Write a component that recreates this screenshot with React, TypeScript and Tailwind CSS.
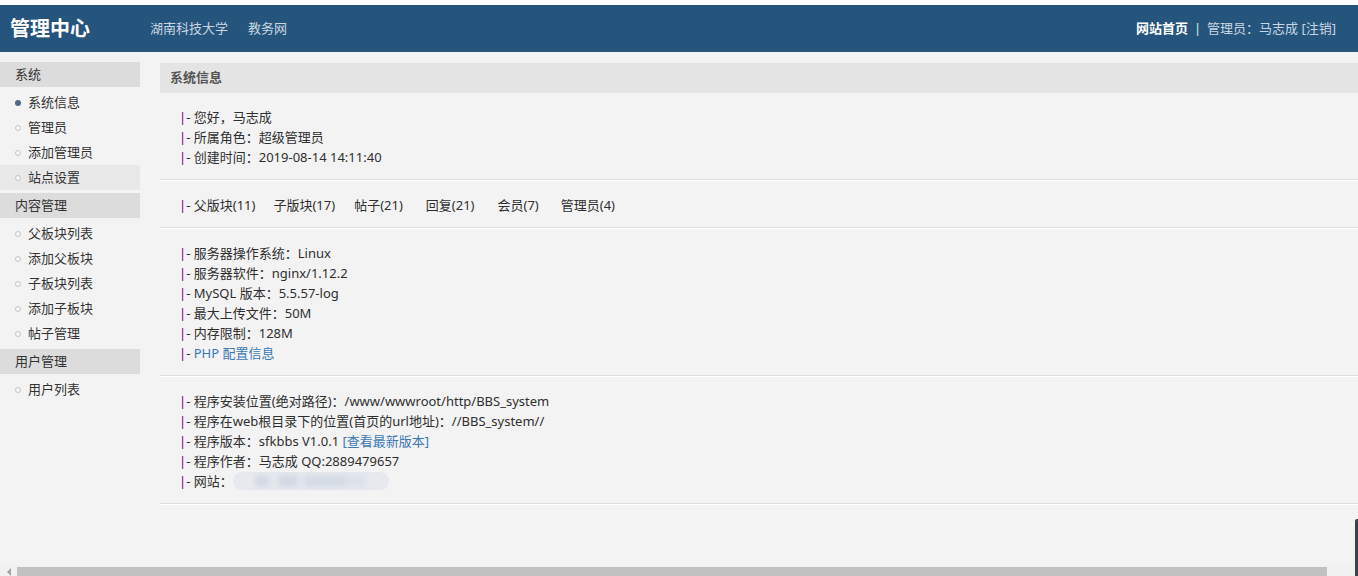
import React from "react";

const menu: { title: string; items: { label: string; active?: boolean; hover?: boolean }[] }[] = [
  {
    title: "系统",
    items: [
      { label: "系统信息", active: true },
      { label: "管理员" },
      { label: "添加管理员" },
      { label: "站点设置", hover: true },
    ],
  },
  {
    title: "内容管理",
    items: [
      { label: "父板块列表" },
      { label: "添加父板块" },
      { label: "子板块列表" },
      { label: "添加子板块" },
      { label: "帖子管理" },
    ],
  },
  {
    title: "用户管理",
    items: [{ label: "用户列表" }],
  },
];

const Bar: React.FC = () => (
  <>
    <span className="text-[#800080]">|</span>
    <span className="whitespace-pre">- </span>
  </>
);

const Line: React.FC<{ children: React.ReactNode }> = ({ children }) => (
  <div className="leading-[20px] whitespace-nowrap">
    <Bar />
    {children}
  </div>
);

const Section: React.FC<{ first?: boolean; children: React.ReactNode }> = ({
  first,
  children,
}) => (
  <div
    className={`${first ? "pt-[14px]" : "pt-[15px]"} pb-[12px] pl-[19px] border-b border-[#dedede] shadow-[0_1px_0_#ffffff]`}
  >
    {children}
  </div>
);

const App: React.FC = () => {
  return (
    <div className="relative h-[576px] w-full overflow-hidden flex flex-col bg-[#f3f3f3] text-[13px] text-[#2f2f2f] font-['Noto_Sans','Noto_Sans_CJK_SC',sans-serif]">
      <div className="h-[5px] bg-white shrink-0" />
      <header className="h-[47px] shrink-0 bg-[#25557d] flex items-center pl-[10px] pr-[22px]">
        <div className="text-[20px] font-bold text-white">管理中心</div>
        <nav className="ml-[60px] flex gap-[20px] text-[#c9d6e2]">
          <span>湖南科技大学</span>
          <span>教务网</span>
        </nav>
        <div className="ml-auto flex items-center text-[#c9d6e2]">
          <span className="font-bold text-white">网站首页</span>
          <span className="mx-[6px] text-[#dfe7ef]">|</span>
          <span>管理员：马志成 [注销]</span>
        </div>
      </header>

      <div className="flex flex-1">
        <aside className="w-[140px] shrink-0 pt-[10px]">
          {menu.map((group, gi) => (
            <div key={group.title} className={gi > 0 ? "mt-[3px]" : ""}>
              <div className="h-[25px] flex items-center pl-[15px] bg-[#dcdcdc] text-[#333]">
                {group.title}
              </div>
              <ul className="pt-[3px]">
                {group.items.map((item) => (
                  <li
                    key={item.label}
                    className={`h-[25px] flex items-center pl-[15px] ${item.hover ? "bg-[#e8e8e8]" : ""}`}
                  >
                    <span
                      className={`w-[6px] h-[6px] rounded-full ${
                        item.active
                          ? "bg-[#4a6987]"
                          : "border border-[#c4c4c4] bg-[#f7f7f7]"
                      }`}
                    />
                    <span className="ml-[7px] text-[#333]">{item.label}</span>
                  </li>
                ))}
              </ul>
            </div>
          ))}
        </aside>

        <main className="flex-1 ml-[20px] pt-[11px]">
          <div className="h-[30px] flex items-center pl-[10px] bg-[#e4e4e4] font-bold text-[#555]">
            系统信息
          </div>

          <Section first>
            <Line>您好，马志成</Line>
            <Line>所属角色：超级管理员</Line>
            <Line>创建时间：2019-08-14 14:11:40</Line>
          </Section>

          <Section>
            <div className="flex leading-[20px] whitespace-nowrap">
              <span>
                <Bar />
                父版块(11)
              </span>
              <span className="ml-[18px]">子版块(17)</span>
              <span className="ml-[19px]">帖子(21)</span>
              <span className="ml-[23px]">回复(21)</span>
              <span className="ml-[23px]">会员(7)</span>
              <span className="ml-[22px]">管理员(4)</span>
            </div>
          </Section>

          <Section>
            <Line>服务器操作系统：Linux</Line>
            <Line>服务器软件：nginx/1.12.2</Line>
            <Line>MySQL 版本：5.5.57-log</Line>
            <Line>最大上传文件：50M</Line>
            <Line>内存限制：128M</Line>
            <Line>
              <span className="text-[#3b78b5]">PHP 配置信息</span>
            </Line>
          </Section>

          <Section>
            <Line>程序安装位置(绝对路径)：/www/wwwroot/http/BBS_system</Line>
            <Line>程序在web根目录下的位置(首页的url地址)：//BBS_system//</Line>
            <Line>
              程序版本：sfkbbs V1.0.1{" "}
              <span className="text-[#3b78b5]">[查看最新版本]</span>
            </Line>
            <Line>程序作者：马志成 QQ:2889479657</Line>
            <div className="leading-[20px] flex items-center whitespace-nowrap">
              <Bar />
              <span>网站：</span>
              <span className="w-[156px] h-[18px] rounded-full bg-[#e6e9ee] overflow-hidden flex items-center">
                <span className="flex h-[12px] w-full items-center blur-[2px]">
                  <span className="w-[22px] h-full bg-[#e6e9ee]" />
                  <span className="w-[14px] h-full bg-[#d5dbe6]" />
                  <span className="w-[10px] h-full bg-[#e2e6ed]" />
                  <span className="w-[18px] h-full bg-[#d4dae5]" />
                  <span className="w-[8px] h-full bg-[#e0e4eb]" />
                  <span className="w-[40px] h-full bg-[#d6dce6]" />
                  <span className="w-[20px] h-full bg-[#dde2ea]" />
                  <span className="w-[24px] h-full bg-[#e5e8ee]" />
                </span>
              </span>
            </div>
          </Section>
        </main>
      </div>

      {/* bottom scrollbar */}
      <div className="h-[11px] shrink-0 bg-[#f1f1f1] flex items-center pt-[2px]">
        <span className="w-[17px] flex justify-center">
          <span className="w-0 h-0 border-y-[4px] border-y-transparent border-r-[4px] border-r-[#a3a3a3]" />
        </span>
        <span className="w-[1310px] h-full bg-[#c1c1c1]" />
      </div>
      <div className="absolute right-0 bottom-0 w-[3px] h-[57px] bg-[#3b404b] rounded-tl-[2px]" />
    </div>
  );
};

export default App;
